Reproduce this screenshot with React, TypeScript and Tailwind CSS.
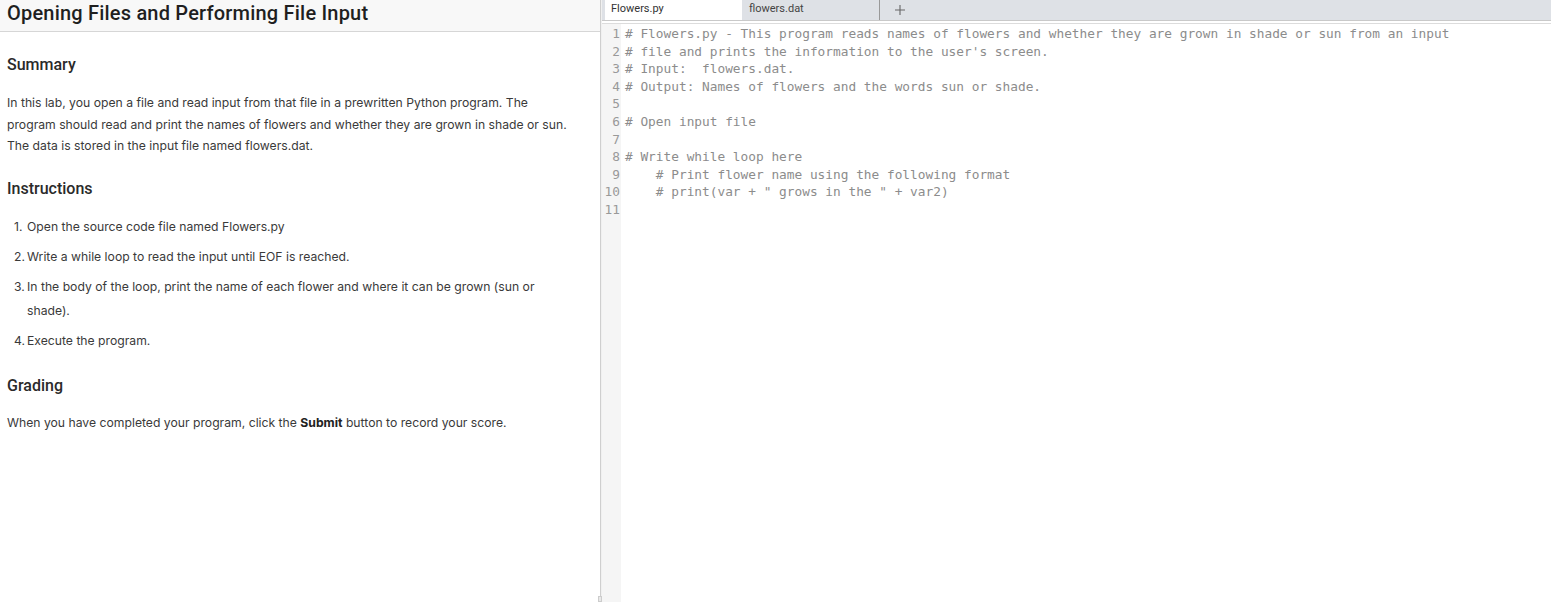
import React from "react";

const code = [
  "# Flowers.py - This program reads names of flowers and whether they are grown in shade or sun from an input",
  "# file and prints the information to the user's screen.",
  "# Input:  flowers.dat.",
  "# Output: Names of flowers and the words sun or shade.",
  "",
  "# Open input file",
  "",
  "# Write while loop here",
  "    # Print flower name using the following format",
  "    # print(var + \" grows in the \" + var2)",
  "",
];

const steps: React.ReactNode[] = [
  "Open the source code file named Flowers.py",
  "Write a while loop to read the input until EOF is reached.",
  <>
    In the body of the loop, print the name of each flower and where it can be grown (sun or
    <br />
    shade).
  </>,
  "Execute the program.",
];

export default function App() {
  return (
    <div className="flex h-[602px] w-[1551px] overflow-hidden bg-white font-['Roboto',sans-serif] text-[#222]">
      {/* instructions */}
      <div className="flex w-[600px] shrink-0 flex-col">
        <div className="flex h-[32px] items-center border-b border-[#d6d6d6] bg-[#f8f8f8] px-[7px] pb-[5px]">
          <h1 className="text-[20px] font-medium leading-none tracking-[0.2px] text-[#1f1f1f]">
            Opening Files and Performing File Input
          </h1>
        </div>
        <div className="px-[7px] pt-[23px]">
          <h2 className="text-[16px] font-medium leading-[20px] text-[#2a2a2a]">Summary</h2>
          <p className="mt-[17px] font-['Inter',sans-serif] text-[12.2px] leading-[21.5px] text-[#3a3a3a]">
            In this lab, you open a file and read input from that file in a prewritten Python program. The
            <br />
            program should read and print the names of flowers and whether they are grown in shade or sun.
            <br />
            The data is stored in the input file named flowers.dat.
          </p>
          <h2 className="mt-[22px] text-[16px] font-medium leading-[20px] text-[#2a2a2a]">Instructions</h2>
          <ol className="mt-[16px] pl-[7px] font-['Inter',sans-serif] text-[12.2px] text-[#3a3a3a]">
            {steps.map((s, i) => (
              <li key={i} className="mb-[6px] flex leading-[24px]">
                <span className="w-[13px] shrink-0">{i + 1}.</span>
                <span>{s}</span>
              </li>
            ))}
          </ol>
          <h2 className="mt-[23px] text-[16px] font-medium leading-[20px] text-[#2a2a2a]">Grading</h2>
          <p className="mt-[17px] font-['Inter',sans-serif] text-[12.2px] leading-[20px] text-[#3a3a3a]">
            When you have completed your program, click the <b className="font-bold text-[#222]">Submit</b> button to
            record your score.
          </p>
        </div>
      </div>

      {/* splitter */}
      <div className="relative w-[2px] shrink-0 border-l border-[#cfcfcf] bg-[#f0f0f0]">
        <div className="absolute bottom-0 left-[-3px] h-[6px] w-[4px] border border-[#ccc] bg-[#e8e8e8]" />
      </div>

      {/* editor */}
      <div className="flex min-w-0 flex-1 flex-col">
        <div className="flex h-[21px] items-end border-b border-[#c9c9c9] bg-[#dee1e6] pl-[3px] text-[11px]">
          <div className="flex h-[21px] w-[137px] items-center bg-white pl-[6px] text-[#333]">Flowers.py</div>
          <div className="flex h-[21px] w-[138px] items-center border-r border-[#999] pl-[7px] text-[#444]">
            flowers.dat
          </div>
          <div className="flex h-[21px] w-[40px] items-center justify-center">
            <svg width="12" height="12" viewBox="0 0 12 12" stroke="#666" strokeWidth="1.1">
              <path d="M6 1v10M1 6h10" />
            </svg>
          </div>
        </div>
        <div className="mt-[2px] flex flex-1 border-t border-[#dcdcdc]">
          <div className="w-[19px] shrink-0 bg-[#f5f5f5] pt-[1px] pr-[1px] text-right font-['DejaVu_Sans_Mono',monospace] text-[12.8px] leading-[17.6px] text-[#999]">
            {code.map((_, i) => (
              <div key={i}>{i + 1}</div>
            ))}
          </div>
          <pre className="pl-[4px] pt-[1px] font-['DejaVu_Sans_Mono',monospace] text-[12.8px] leading-[17.6px] text-[#8c8c8c]">
            {code.map((l, i) => (
              <div key={i}>{l || " "}</div>
            ))}
          </pre>
        </div>
      </div>
    </div>
  );
}
